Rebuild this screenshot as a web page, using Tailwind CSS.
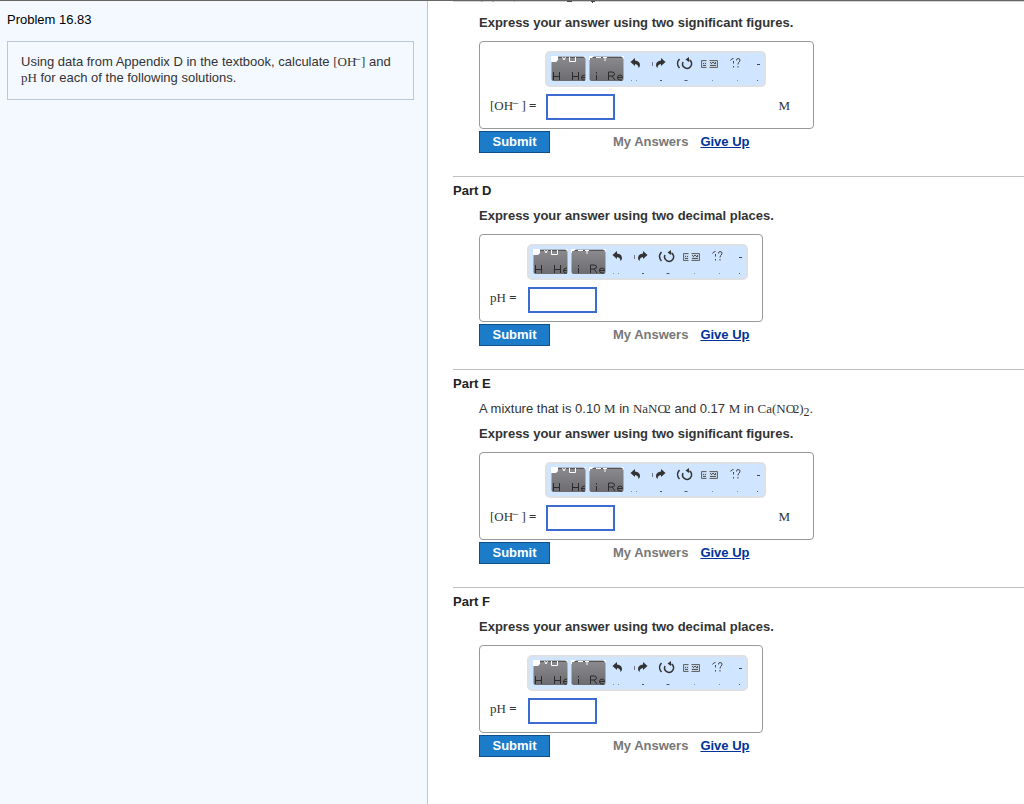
<!DOCTYPE html>
<html lang="en">
<head>
    <meta charset="UTF-8">
    <meta name="viewport" content="width=device-width, initial-scale=1.0">
    <title>Problem 16.83</title>
    <script src="https://cdn.jsdelivr.net/npm/@tailwindcss/browser@4"></script>
</head>
<body class="bg-white font-['Liberation_Sans',Arial,sans-serif] text-[13px] leading-4 text-[#333333]">

    <!-- gradient used by the toolbar buttons -->
    <svg class="absolute h-0 w-0" aria-hidden="true">
        <defs>
            <linearGradient id="buttonShade" x1="0" y1="0" x2="0" y2="1">
                <stop offset="0" stop-color="#8c8c90"/>
                <stop offset="1" stop-color="#6c6c70"/>
            </linearGradient>
        </defs>
    </svg>

    <!-- shared equation toolbar, copied into every answer box -->
    <template id="toolbarTemplate">
        <button type="button" aria-label="Templates" class="w-[35px] h-[26px] mr-[3px]">
            <svg width="35" height="26" viewBox="0 0 35 26">
                <rect x="0.5" y="0.500" width="34" height="24.500" rx="2" fill="url(#buttonShade)"/>
                <path d="M1 1.500H34" stroke="#555" fill="none"/>
                <path d="M0 0H7V4L5 6H0Z" fill="#fff"/>
                <path d="M11.500 1L13 4L14.500 1M18.500 1V5.500H24.500V1" stroke="#fff" fill="none"/>
                <path d="M32 0H35V3Z" fill="#eee"/>
                <path d="M2.500 16V24M8.500 16V24M2.500 20.500H8.500M21.500 16V24M27.500 16V24M21.500 20.500H27.500M34 24H32Q30.500 24 30.500 21.500Q30.500 19 34 19M30.500 21.500H34" stroke="#2b2b2b" fill="none"/>
            </svg>
        </button>
        <button type="button" aria-label="Symbols" class="w-[35px] h-[26px]">
            <svg width="35" height="26" viewBox="0 0 35 26">
                <rect x="0.5" y="0.500" width="34" height="24.500" rx="2" fill="url(#buttonShade)"/>
                <path d="M1 1.500H34" stroke="#555" fill="none"/>
                <path d="M0 0H5L3 2H1V4H0ZM7 1H12V2H7ZM14 1H18V2H16.500V5H15.500V2H14ZM32 0H35V3Z" fill="#fff"/>
                <path d="M7.500 19V24M7.500 16V17.500M19.500 24V16H23Q25.500 16 25.500 18Q25.500 20 23 20H19.500M23 20L26 24M33 24H31Q28.500 24 28.500 21.500Q28.500 19 31 19Q33.500 19 33.500 21.500H28.500" stroke="#2b2b2b" fill="none"/>
            </svg>
        </button>
        <button type="button" aria-label="Undo" class="w-[25px] h-[26px]">
            <svg width="25" height="26" viewBox="0 0 25 26">
                <path d="M6.500 6L11 2V4.500Q16 5 16 9Q16 11 14.500 12Q14.500 8.500 11 8V10Z" fill="#333"/>
                <path d="M7 24.500H8M12 24.500H13" stroke="#8090a0"/>
            </svg>
        </button>
        <button type="button" aria-label="Redo" class="w-[25px] h-[26px]">
            <svg width="25" height="26" viewBox="0 0 25 26">
                <path d="M16.500 6L12 2V4.500Q7 5 7 9Q7 11 8.500 12Q8.500 8.500 12 8V10Z" fill="#333"/>
                <path d="M3.500 6V10" stroke="#778"/>
                <path d="M11 24.500H13" stroke="#556"/>
            </svg>
        </button>
        <button type="button" aria-label="Reset" class="w-[25px] h-[26px]">
            <svg width="25" height="26" viewBox="0 0 25 26">
                <path d="M5.500 3Q1.500 7.500 5.500 12" fill="none" stroke="#333" stroke-width="1.500"/>
                <path d="M9 6A4.500 4.500 0 0 0 16.500 10.800A4.500 4.500 0 0 0 15.500 4" fill="none" stroke="#333" stroke-width="1.500"/>
                <path d="M11.500 3.500L15 1V6Z" fill="#333"/>
                <path d="M10.500 24.500H13.500" stroke="#556"/>
            </svg>
        </button>
        <button type="button" aria-label="Keyboard shortcuts" class="w-[25px] h-[26px]">
            <svg width="25" height="26" viewBox="0 0 25 26">
                <path d="M7.500 4.500H2.500V11.500H7.500M10.500 4.500H18.500V11.500H10.500" fill="#c3d3e6" stroke="#666"/>
                <path d="M4 7.500H5M6 7.500H7M4 9.500H7M11 6.500H12M13 6.500H15M16 6.500H17M12 7.500H13M15 7.500H17M11 9.500H17" stroke="#555"/>
                <path d="M13 24.500H14" stroke="#8090a0"/>
            </svg>
        </button>
        <button type="button" aria-label="Help" class="w-[25px] h-[26px]">
            <svg width="25" height="26" viewBox="0 0 25 26">
                <path d="M6.500 4.500Q7.500 2.500 9.500 2.500M9.500 5V7.500M9.500 10V11.500M12.500 4.500Q12.500 2.500 14 2.500Q16.500 2.500 16 5Q14 6.500 14 8.500M14 10V11.500" fill="none" stroke="#444"/>
                <path d="M13 24.500H14" stroke="#8090a0"/>
            </svg>
        </button>
        <button type="button" aria-label="More" class="w-[20px] h-[26px]">
            <svg width="20" height="26" viewBox="0 0 20 26">
                <path d="M8 8.500H11" stroke="#444"/>
                <path d="M8 24.500H9" stroke="#556"/>
            </svg>
        </button>
    </template>

    <div class="flex min-h-screen border-t border-[#666666]">
        <aside class="w-[428px] shrink-0 border-r border-[#b9c7d6] bg-[#f4f9ff] px-[7px] pt-[11px]">
            <h1 class="text-black">Problem 16.83</h1>
            <div class="mt-[13px] mr-[6px] min-h-[59px] border border-[#b9c7d6] px-[13px] pt-[11px]">
                <p>Using data from Appendix D in the textbook, calculate <span class="font-['Liberation_Serif',serif]">[OH<sup class="top-0 -ml-0.5 align-[3px] text-[12px] leading-none">−</sup>]</span> and <span class="font-['Liberation_Serif',serif]">pH</span> for each of the following solutions.</p>
            </div>
        </aside>

        <main class="min-w-0 flex-1 pl-[25px]">
            <section class="pb-[23px]">
                <!-- lower edge of the line scrolled out of view -->
                <svg class="block h-[4px] w-full" aria-hidden="true">
                    <path d="M0 0.500H600" stroke="#d4d2d2"/>
                    <path d="M114 0.500H119M138 0.500H142M139 1.500H140" stroke="#444"/>
                    <path d="M28 0.500H30M39 0.500H41M61 0.500H62" stroke="#aaa"/>
                </svg>
                <div class="pl-[26px] pt-[10px]">
                    <p class="font-bold">Express your answer using two significant figures.</p>
                    <div class="mt-[10px] w-[335px] h-[88px] rounded-sm border border-[#999999] pl-[10px] pt-[9px]">
                        <div class="toolbar ml-[55px] flex h-[36px] w-[221px] rounded-[5px] border-2 border-[#dde0e4] bg-[#d0e5ff] pl-[4px] pt-[3px]"></div>
                        <div class="mt-[7px] flex items-center">
                            <label for="answerC" class="w-[56px] pb-[4px] font-['Liberation_Serif',serif]">[OH<sup class="top-0 -ml-px align-[3px] text-[12px] leading-none">−</sup>&thinsp;] <b>=</b></label>
                            <input id="answerC" type="text" class="h-[26px] w-[69px] border-2 border-[#3c6cd2] bg-white px-1">
                            <span class="ml-auto mr-[23px] pb-[3px] font-['Liberation_Serif',serif]">M</span>
                        </div>
                    </div>
                    <div class="mt-[2px] flex h-[22px] items-center">
                        <button type="button" class="h-[22px] w-[71px] border border-[#0d4f86] bg-[#1c7cca] font-bold text-white">Submit</button>
                        <span class="ml-[63px] font-bold text-[#777777]">My Answers</span>
                        <a href="#" class="ml-[12px] font-bold text-[#003399] underline">Give Up</a>
                    </div>
                </div>
            </section>

            <section class="border-t border-[#c0c0c0] pb-[23px] pt-[6px]">
                <h2 class="font-bold text-[#222222]">Part D</h2>
                <div class="pl-[26px] pt-[9px]">
                    <p class="font-bold">Express your answer using two decimal places.</p>
                    <div class="mt-[10px] w-[284px] h-[88px] rounded-sm border border-[#999999] pl-[10px] pt-[9px]">
                        <div class="toolbar ml-[37px] flex h-[36px] w-[221px] rounded-[5px] border-2 border-[#dde0e4] bg-[#d0e5ff] pl-[4px] pt-[3px]"></div>
                        <div class="mt-[7px] flex items-center">
                            <label for="answerD" class="w-[38px] pb-[4px] font-['Liberation_Serif',serif]">pH <b>=</b></label>
                            <input id="answerD" type="text" class="h-[26px] w-[69px] border-2 border-[#3c6cd2] bg-white px-1">
                        </div>
                    </div>
                    <div class="mt-[2px] flex h-[22px] items-center">
                        <button type="button" class="h-[22px] w-[71px] border border-[#0d4f86] bg-[#1c7cca] font-bold text-white">Submit</button>
                        <span class="ml-[63px] font-bold text-[#777777]">My Answers</span>
                        <a href="#" class="ml-[12px] font-bold text-[#003399] underline">Give Up</a>
                    </div>
                </div>
            </section>

            <section class="border-t border-[#c0c0c0] pb-[23px] pt-[6px]">
                <h2 class="font-bold text-[#222222]">Part E</h2>
                <div class="pl-[26px] pt-[9px]">
                    <p class="mb-[9px] h-4">A mixture that is 0.10 <span class="font-['Liberation_Serif',serif]">M</span> in <span class="font-['Liberation_Serif',serif]">NaNO<sub class="bottom-0 -ml-0.5 align-baseline text-[12px] leading-none">2</sub></span> and 0.17 <span class="font-['Liberation_Serif',serif]">M</span> in <span class="font-['Liberation_Serif',serif]">Ca(NO<sub class="bottom-0 -ml-0.5 align-baseline text-[12px] leading-none">2</sub>)<sub class="text-[12px] leading-none">2</sub></span>.</p>
                    <p class="font-bold">Express your answer using two significant figures.</p>
                    <div class="mt-[10px] w-[335px] h-[88px] rounded-sm border border-[#999999] pl-[10px] pt-[9px]">
                        <div class="toolbar ml-[55px] flex h-[36px] w-[221px] rounded-[5px] border-2 border-[#dde0e4] bg-[#d0e5ff] pl-[4px] pt-[3px]"></div>
                        <div class="mt-[7px] flex items-center">
                            <label for="answerE" class="w-[56px] pb-[4px] font-['Liberation_Serif',serif]">[OH<sup class="top-0 -ml-px align-[3px] text-[12px] leading-none">−</sup>&thinsp;] <b>=</b></label>
                            <input id="answerE" type="text" class="h-[26px] w-[69px] border-2 border-[#3c6cd2] bg-white px-1">
                            <span class="ml-auto mr-[23px] pb-[3px] font-['Liberation_Serif',serif]">M</span>
                        </div>
                    </div>
                    <div class="mt-[2px] flex h-[22px] items-center">
                        <button type="button" class="h-[22px] w-[71px] border border-[#0d4f86] bg-[#1c7cca] font-bold text-white">Submit</button>
                        <span class="ml-[63px] font-bold text-[#777777]">My Answers</span>
                        <a href="#" class="ml-[12px] font-bold text-[#003399] underline">Give Up</a>
                    </div>
                </div>
            </section>

            <section class="border-t border-[#c0c0c0] pb-[23px] pt-[6px]">
                <h2 class="font-bold text-[#222222]">Part F</h2>
                <div class="pl-[26px] pt-[9px]">
                    <p class="font-bold">Express your answer using two decimal places.</p>
                    <div class="mt-[10px] w-[284px] h-[88px] rounded-sm border border-[#999999] pl-[10px] pt-[9px]">
                        <div class="toolbar ml-[37px] flex h-[36px] w-[221px] rounded-[5px] border-2 border-[#dde0e4] bg-[#d0e5ff] pl-[4px] pt-[3px]"></div>
                        <div class="mt-[7px] flex items-center">
                            <label for="answerF" class="w-[38px] pb-[4px] font-['Liberation_Serif',serif]">pH <b>=</b></label>
                            <input id="answerF" type="text" class="h-[26px] w-[69px] border-2 border-[#3c6cd2] bg-white px-1">
                        </div>
                    </div>
                    <div class="mt-[2px] flex h-[22px] items-center">
                        <button type="button" class="h-[22px] w-[71px] border border-[#0d4f86] bg-[#1c7cca] font-bold text-white">Submit</button>
                        <span class="ml-[63px] font-bold text-[#777777]">My Answers</span>
                        <a href="#" class="ml-[12px] font-bold text-[#003399] underline">Give Up</a>
                    </div>
                </div>
            </section>
        </main>
    </div>

    <script>
        const toolbars = document.querySelectorAll(".toolbar");
        const toolbarTemplate = document.getElementById("toolbarTemplate");

        toolbars.forEach((bar) => {
            bar.appendChild(toolbarTemplate.content.cloneNode(true))
        })
    </script>
</body>
</html>
